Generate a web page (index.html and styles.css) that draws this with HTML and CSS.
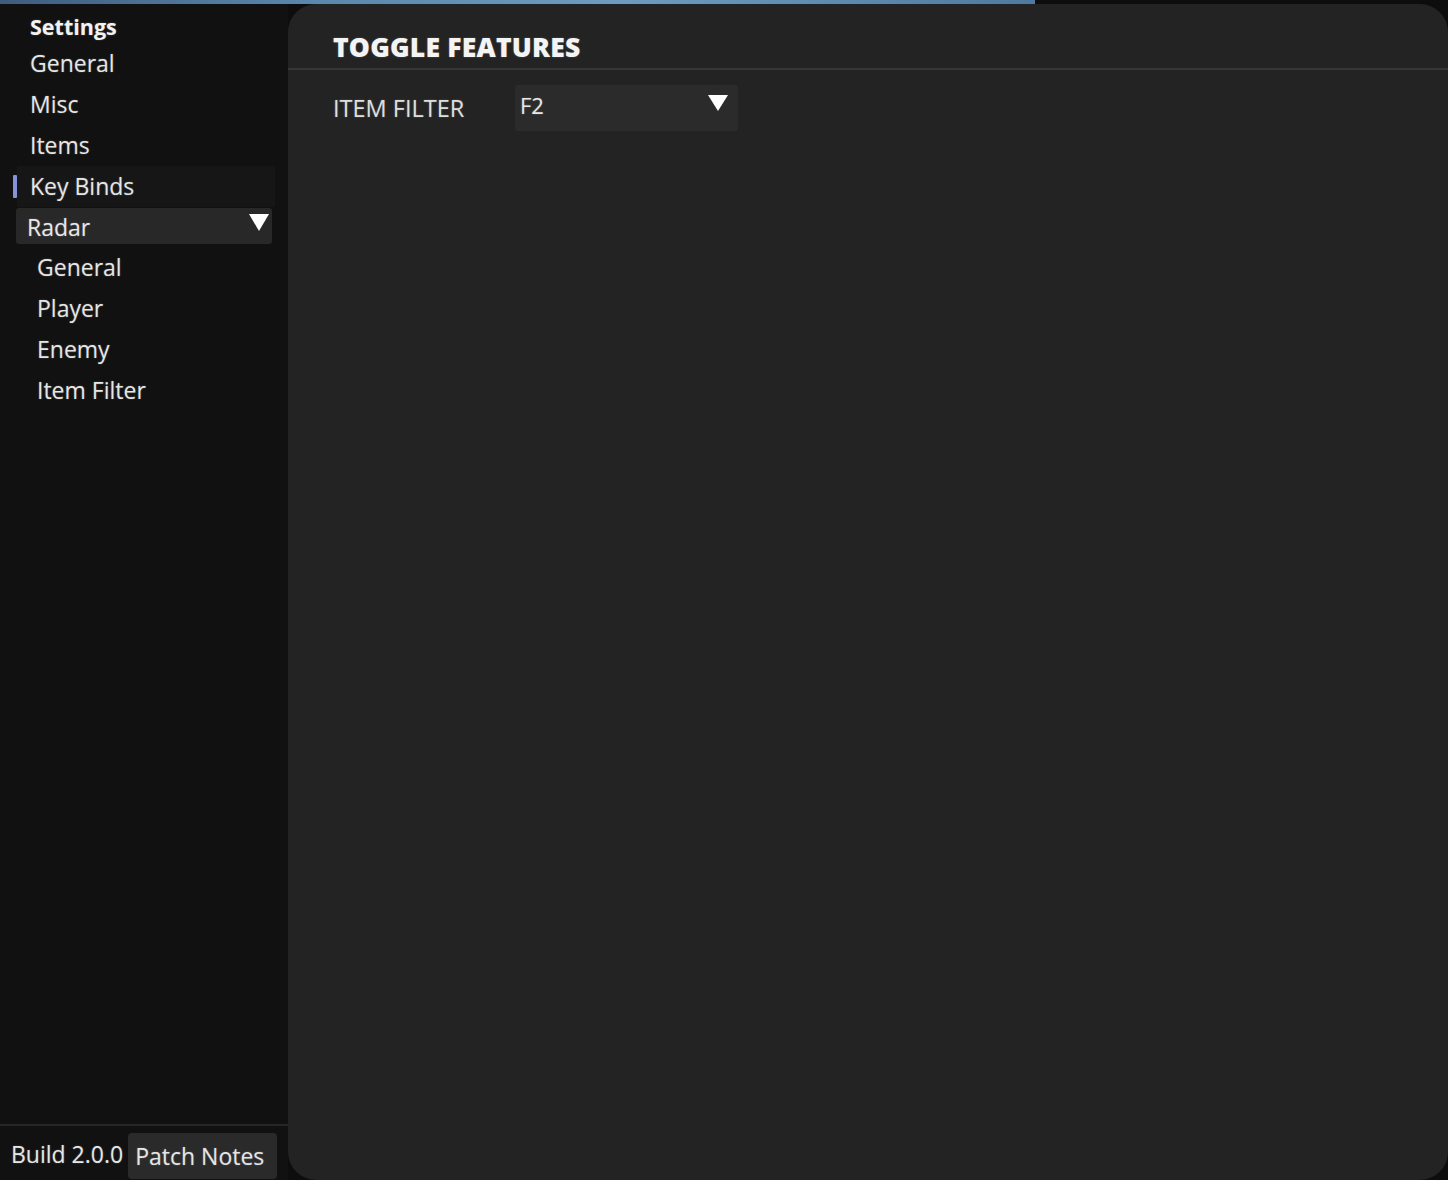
FILE: index.html
```html
<!DOCTYPE html>
<html lang="en">
<head>
    <meta charset="UTF-8">
    <title>Settings - Key Binds</title>
    <link rel="stylesheet" href="styles.css">
</head>
<body>
    <div class="top-strip"></div>
    <div class="app">
        <aside class="sidebar">
            <nav class="nav">
                <div class="nav-title">Settings</div>
                <a class="nav-item">General</a>
                <a class="nav-item">Misc</a>
                <a class="nav-item">Items</a>
                <a class="nav-item active">Key Binds</a>
                <div class="nav-group">
                    <span>Radar</span>
                    <svg class="tri" width="22" height="19" viewBox="0 0 22 19"><polygon points="1,1 21,1 11,18" fill="#fff"/></svg>
                </div>
                <a class="nav-sub">General</a>
                <a class="nav-sub">Player</a>
                <a class="nav-sub">Enemy</a>
                <a class="nav-sub">Item Filter</a>
            </nav>
            <div class="footer">
                <span class="build">Build 2.0.0</span>
                <button class="patch-btn">Patch Notes</button>
            </div>
        </aside>
        <main class="panel">
            <h2 class="panel-title">TOGGLE FEATURES</h2>
            <div class="panel-body">
                <div class="bind-row">
                    <span class="bind-label">ITEM FILTER</span>
                    <div class="select">
                        <span>F2</span>
                        <svg class="tri" width="22" height="18" viewBox="0 0 22 18"><polygon points="1,1 21,1 11,17" fill="#fff"/></svg>
                    </div>
                </div>
            </div>
        </main>
    </div>
</body>
</html>
```

FILE: styles.css
```css
* {
    box-sizing: border-box;
}
body {
    margin: 0;
    height: 1180px;
    overflow: hidden;
    background: #0d0d0e;
    font-family: "Open Sans", "Noto Sans", sans-serif;
    color: #e8e8e8;
    text-shadow: 0 0 2px rgba(255, 255, 255, 0.25);
}
.top-strip {
    width: 1035px;
    height: 4px;
    background: linear-gradient(90deg, #3d5d7e, #5a87ad 30%, #6d9cc0 60%, #4f7aa0);
}
.app {
    display: flex;
    height: 1176px;
}
.sidebar {
    width: 288px;
    flex-shrink: 0;
    background: #111111;
    display: flex;
    flex-direction: column;
    justify-content: space-between;
}
.nav {
    display: flex;
    flex-direction: column;
    padding-top: 7px;
}
.nav-title {
    font-weight: 700;
    font-size: 21.5px;
    line-height: 32px;
    padding-left: 30px;
    color: #f2f2f2;
}
.nav-item {
    font-size: 23px;
    line-height: 41px;
    padding-left: 30px;
    color: #e6e6e6;
}
.nav-item.active {
    position: relative;
    margin: 0 13px;
    padding-left: 17px;
    background: linear-gradient(90deg, #111 0, #111 4px, #161616 4px);
}
.nav-item.active::before {
    content: "";
    position: absolute;
    left: 0;
    top: 9px;
    width: 4px;
    height: 23px;
    background: #8891dc;
    border-radius: 1px;
}
.nav-group {
    margin: 1px 16px 0 16px;
    height: 36px;
    background: #282828;
    border-radius: 3px;
    display: flex;
    align-items: center;
    justify-content: space-between;
    padding: 2px 2px 0 11px;
    font-size: 23px;
}
.nav-group .tri {
    margin-top: -10px;
}
.nav-sub {
    font-size: 23px;
    line-height: 41px;
    padding-left: 37px;
    color: #e6e6e6;
}
.nav-group + .nav-sub {
    margin-top: 3px;
}
.footer {
    border-top: 2px solid #262626;
    height: 56px;
    display: flex;
    align-items: center;
    padding: 0 10px 0 11px;
    gap: 5px;
    font-size: 23px;
}
.build {
    color: #e6e6e6;
    margin-top: 2px;
}
.patch-btn {
    font-family: inherit;
    font-size: 23px;
    color: #e6e6e6;
    text-shadow: inherit;
    background: #2a2a2a;
    border: none;
    border-radius: 4px;
    height: 46px;
    width: 149px;
    padding: 0 0 0 7px;
    text-align: left;
    margin-top: 6px;
}
.panel {
    flex: 1;
    background: #232323;
    border-radius: 28px;
    height: 1176px;
}
.panel-title {
    margin: 0;
    padding: 24px 0 0 45px;
    height: 66px;
    font-size: 26.5px;
    font-weight: 800;
    letter-spacing: 0.2px;
    color: #f4f4f4;
    border-bottom: 2px solid #363636;
    line-height: 38px;
}
.panel-body {
    padding: 15px 0 0 45px;
}
.bind-row {
    display: flex;
    align-items: center;
    gap: 50px;
}
.bind-label {
    font-size: 23.5px;
    color: #dedede;
    width: 132px;
}
.select {
    width: 223px;
    height: 46px;
    background: #2b2b2b;
    border-radius: 3px;
    display: flex;
    justify-content: space-between;
    padding: 5px 9px 0 5px;
    font-size: 22px;
}
.select .tri {
    margin-top: 4px;
}
```
